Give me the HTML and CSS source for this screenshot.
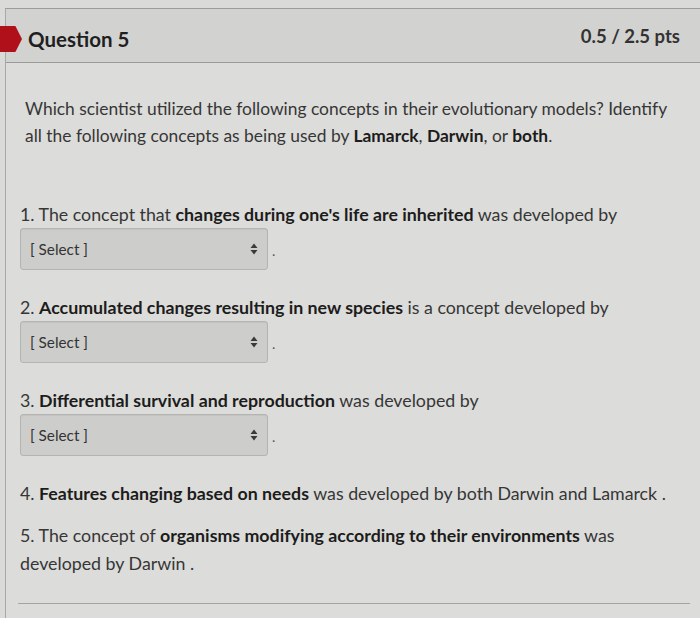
FILE: index.html
```html
<!DOCTYPE html>
<html>
<head>
<meta charset="utf-8">
<link rel="stylesheet" href="styles.css">
</head>
<body>
<div class="page">
  <div class="question">
    <div class="header">
      <span class="title">Question 5</span>
      <span class="pts">0.5 / 2.5 pts</span>
    </div>
    <div class="content">
      <p class="intro">Which scientist utilized the following concepts in their evolutionary models? Identify<br>all the following concepts as being used by <b>Lamarck</b>, <b>Darwin</b>, or <b>both</b>.</p>
      <div class="item item1">
        <p class="line">1. The concept that <b>changes during one's life are inherited</b> was developed by</p>
        <div class="selrow"><div class="select"><span>[ Select ]</span><span class="arrows"><svg width="8" height="12" viewBox="0 0 8 12"><path d="M4 0.5L7.5 5H0.5Z M4 11.5L7.5 7H0.5Z" fill="#3a3a3a"/></svg></span></div><span class="dot">.</span></div>
      </div>
      <div class="item item2">
        <p class="line">2. <b>Accumulated changes resulting in new species</b> is a concept developed by</p>
        <div class="selrow"><div class="select"><span>[ Select ]</span><span class="arrows"><svg width="8" height="12" viewBox="0 0 8 12"><path d="M4 0.5L7.5 5H0.5Z M4 11.5L7.5 7H0.5Z" fill="#3a3a3a"/></svg></span></div><span class="dot">.</span></div>
      </div>
      <div class="item item3">
        <p class="line">3. <b>Differential survival and reproduction</b> was developed by</p>
        <div class="selrow"><div class="select"><span>[ Select ]</span><span class="arrows"><svg width="8" height="12" viewBox="0 0 8 12"><path d="M4 0.5L7.5 5H0.5Z M4 11.5L7.5 7H0.5Z" fill="#3a3a3a"/></svg></span></div><span class="dot">.</span></div>
      </div>
      <p class="line item4">4. <b>Features changing based on needs</b> was developed by both Darwin and Lamarck .</p>
      <p class="line item5">5. The concept of <b>organisms modifying according to their environments</b> was<br>developed by Darwin .</p>
    </div>
    <div class="bottomline"></div>
  </div>
  <div class="marker"></div>
</div>
</body>
</html>
```
FILE: styles.css
```css
html, body {
  margin: 0;
  padding: 0;
}
body {
  background: #dadad8;
  font-family: Lato, "Open Sans", sans-serif;
  color: #363636;
  width: 700px;
  height: 618px;
  overflow: hidden;
}
.page {
  position: relative;
  padding-top: 8px;
  padding-left: 5px;
}
.question {
  border-top: 1px solid #9c9c9a;
  border-left: 1px solid #a8a8a6;
  background: #dcdcda;
  height: 610px;
}
.header {
  height: 53px;
  background: #d2d2d0;
  border-bottom: 1px solid #9a9a98;
  display: flex;
  justify-content: space-between;
  align-items: center;
  padding: 0 20px 0 22px;
}
.title {
  font-size: 20.5px;
  font-weight: 700;
  color: #1f1f1f;
  margin-top: 6px;
}
.pts {
  font-size: 18.5px;
  font-weight: 700;
  color: #333;
  margin-top: 0;
}
.marker {
  position: absolute;
  left: 0;
  top: 26px;
  width: 22px;
  height: 26px;
  background: #b0101a;
  clip-path: polygon(0 0, 70% 0, 100% 50%, 70% 100%, 0 100%);
}
.content {
  padding: 0 10px 0 14px;
}
p {
  margin: 0;
}
.intro {
  font-size: 17.4px;
  line-height: 27px;
  padding-left: 5px;
  margin-top: 32px;
  white-space: nowrap;
}
b {
  font-weight: 700;
  color: #1c1c1c;
}
.line {
  font-size: 17.8px;
  line-height: 27px;
}
.item1 {
  margin-top: 52px;
}
.item2 {
  margin-top: 24px;
}
.item3 {
  margin-top: 24px;
}
.selrow {
  display: flex;
  align-items: flex-end;
  margin-top: 0;
}
.select {
  border: 1px solid #b4b4b2;
  border-radius: 3px;
  background: #cdcdcb;
  box-shadow: inset 0 1px 1px rgba(0,0,0,0.05);
  display: flex;
  align-items: center;
  justify-content: space-between;
  padding: 0 9px 0 9px;
  box-sizing: border-box;
  width: 248px;
  height: 42px;
  font-size: 15.3px;
  color: #333;
}
.arrows {
  display: flex;
  align-items: center;
}
.dot {
  font-size: 14px;
  margin-left: 4px;
  margin-bottom: 11px;
  color: #555;
}
.item4 {
  margin-top: 24px;
}
.item5 {
  margin-top: 14px;
  line-height: 28px;
  white-space: nowrap;
}
.bottomline {
  margin: 26px 10px 0 12px;
  border-top: 1px solid #a4a4a2;
}
```
